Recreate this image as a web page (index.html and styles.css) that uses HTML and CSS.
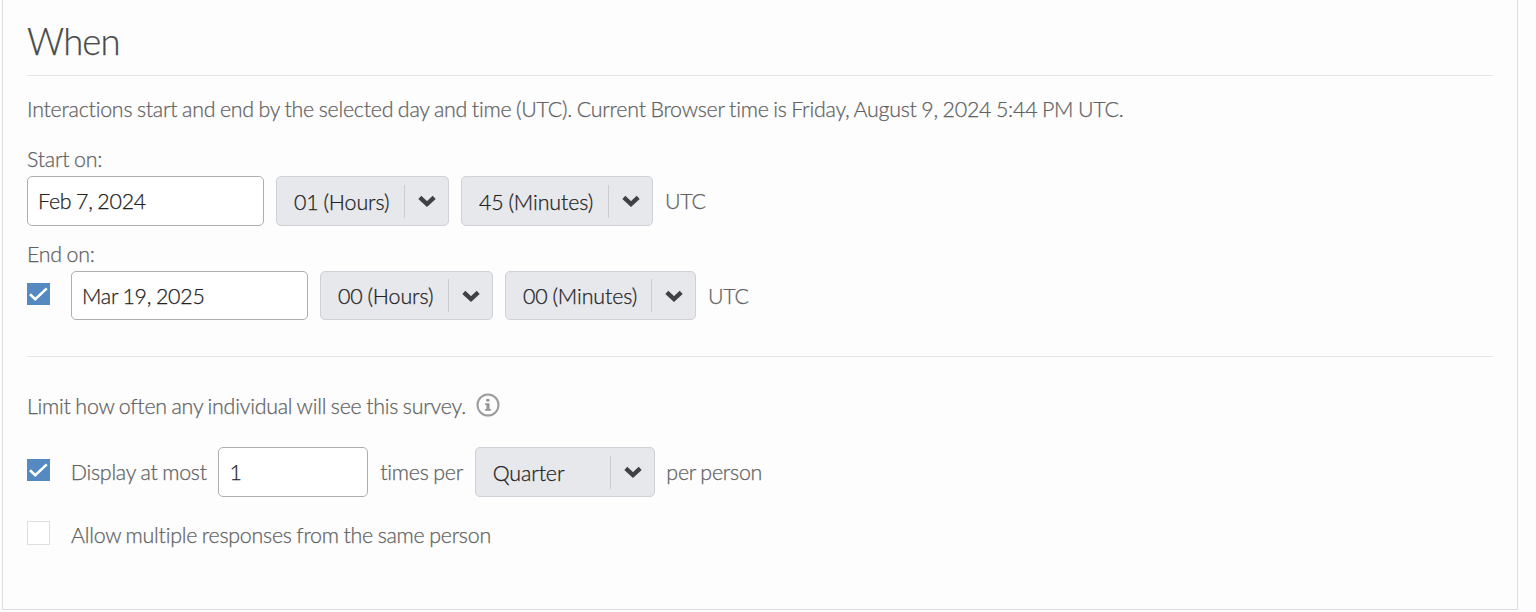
FILE: index.html
```html
<!DOCTYPE html>
<html lang="en">
<head>
    <meta charset="UTF-8">
    <meta name="viewport" content="width=device-width, initial-scale=1.0">
    <title>When</title>
    <link rel="stylesheet" href="styles.css">
</head>
<body>
    <section class="panel">
        <h1>When</h1>
        <p class="intro">Interactions start and end by the selected day and time (UTC). Current Browser time is Friday, August 9, 2024 5:44 PM UTC.</p>

        <div class="label start-label">Start on:</div>
        <div class="row start-row">
            <input type="text" class="date" value="Feb 7, 2024">
            <button class="dropdown hours">
                <span class="value">01 (Hours)</span>
                <svg class="arrow" viewBox="0 0 18 12"><path d="M1.8 2.3 9 9l7.2-6.7"/></svg>
            </button>
            <button class="dropdown minutes">
                <span class="value">45 (Minutes)</span>
                <svg class="arrow" viewBox="0 0 18 12"><path d="M1.8 2.3 9 9l7.2-6.7"/></svg>
            </button>
            <span>UTC</span>
        </div>

        <div class="label end-label">End on:</div>
        <div class="row end-row">
            <span class="checkbox checked"><svg viewBox="0 0 23 22"><path d="M3 11.2 8.2 16.2 19.8 5.4"/></svg></span>
            <input type="text" class="date" value="Mar 19, 2025">
            <button class="dropdown hours">
                <span class="value">00 (Hours)</span>
                <svg class="arrow" viewBox="0 0 18 12"><path d="M1.8 2.3 9 9l7.2-6.7"/></svg>
            </button>
            <button class="dropdown minutes end-minutes">
                <span class="value">00 (Minutes)</span>
                <svg class="arrow" viewBox="0 0 18 12"><path d="M1.8 2.3 9 9l7.2-6.7"/></svg>
            </button>
            <span>UTC</span>
        </div>

        <div class="limit">
            <span>Limit how often any individual will see this survey.</span>
            <svg class="info" viewBox="0 0 24 24">
                <circle cx="12" cy="12" r="10.5"/>
                <path d="M10.2 6h3.2v2.6h-3.2zM9.2 10.2h4.3v5.8h1.3v1.8H9.2V16h1.3v-4H9.2z"/>
            </svg>
        </div>
        <div class="row limit-row">
            <span class="checkbox checked"><svg viewBox="0 0 23 22"><path d="M3 11.2 8.2 16.2 19.8 5.4"/></svg></span>
            <span>Display at most</span>
            <input type="text" class="count" value="1">
            <span>times per</span>
            <button class="dropdown period">
                <span class="value">Quarter</span>
                <svg class="arrow" viewBox="0 0 18 12"><path d="M1.8 2.3 9 9l7.2-6.7"/></svg>
            </button>
            <span>per person</span>
        </div>
        <div class="row allow-row">
            <span class="checkbox"></span>
            <span>Allow multiple responses from the same person</span>
        </div>
    </section>
</body>
</html>
```
FILE: styles.css
```css
* {
    box-sizing: border-box;
}
body {
    margin: 0;
    height: 612px;
    overflow: hidden;
    background-color: #fdfdfd;
    font-family: Lato, sans-serif;
    font-weight: 300;
    font-size: 21.4px;
    line-height: 28px;
    letter-spacing: -0.24px;
    word-spacing: -0.9px;
    color: #626262;
    white-space: nowrap;
    -webkit-text-stroke: 0.25px;
}
.panel {
    width: 1516px;
    height: 610px;
    margin-left: 2px;
    padding: 0 24px;
    border: 1px solid #dcdde0;
    border-top: none;
}
h1 {
    height: 76px;
    margin: 0;
    padding-top: 19px;
    border-bottom: 1px solid #e4e5e7;
    font-size: 36.5px;
    font-weight: 300;
    line-height: 44px;
    letter-spacing: -0.9px;
    color: #4a4a4a;
}
.intro {
    margin: 19px 0 0;
}
.label {
    height: 31px;
}
.start-label {
    margin-top: 22px;
}
.end-label {
    margin-top: 14px;
}
.row {
    display: flex;
    align-items: center;
    height: 50px;
    gap: 12px;
}
.end-row {
    height: 49px;
}
.limit-row {
    gap: 11.7px;
}
input {
    height: 100%;
    padding: 0 10px;
    background-color: #fff;
    border: 1px solid #adadb2;
    border-radius: 5px;
    font: inherit;
    letter-spacing: inherit;
    word-spacing: inherit;
    color: #222;
}
.date {
    width: 237px;
}
.count {
    width: 150px;
}
.dropdown {
    display: flex;
    align-items: center;
    height: 100%;
    padding: 0 12px 0 17px;
    background-color: #e7e8eb;
    border: 1px solid #cfd1d6;
    border-radius: 5px;
    font: inherit;
    letter-spacing: -0.1px;
    word-spacing: inherit;
    color: #222;
    cursor: pointer;
}
.dropdown .value {
    display: flex;
    align-items: center;
    flex: 1;
    height: 33px;
    padding-top: 1px;
    border-right: 1px solid #cbccd0;
}
.hours {
    width: 173px;
}
.minutes {
    width: 192px;
}
.end-minutes {
    width: 191px;
}
.period {
    width: 180px;
}
.arrow {
    width: 18px;
    height: 12px;
    margin-left: 13px;
    fill: none;
    stroke: #404144;
    stroke-width: 4.4;
}
.checkbox {
    width: 23px;
    height: 24px;
    margin: -4px 9px 0 0;
    background-color: #fff;
    border: 1px solid #dddee0;
}
.checkbox.checked {
    height: 22px;
    border: none;
    background-color: #5489c2;
}
.checkbox svg {
    display: block;
    fill: none;
    stroke: #fff;
    stroke-width: 2.6;
}
.limit {
    display: flex;
    align-items: center;
    height: 91px;
    margin-top: 36px;
    padding-top: 7px;
    border-top: 1px solid #e4e5e7;
}
.info {
    width: 24px;
    height: 24px;
    margin: -2px 0 0 10px;
    fill: #929292;
}
.info circle {
    fill: none;
    stroke: #9b9b9b;
    stroke-width: 2;
}
.allow-row {
    margin-top: 13px;
}
```
